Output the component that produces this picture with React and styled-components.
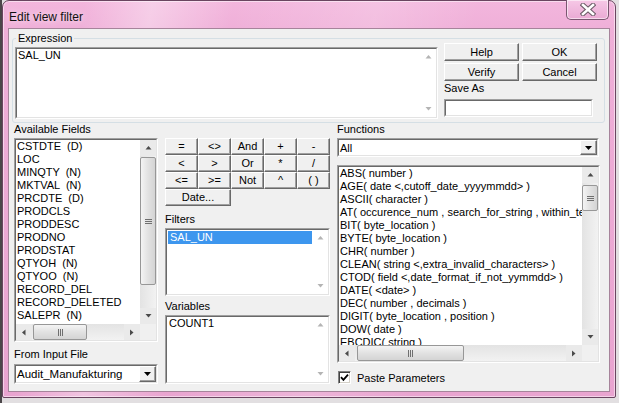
import React from 'react'
import styled, { createGlobalStyle, css } from 'styled-components'

const GlobalStyle = createGlobalStyle`
	html, body {
		margin: 0;
		padding: 0;
	}
	body {
		width: 619px;
		height: 403px;
		overflow: hidden;
		background: linear-gradient(to right, #4b4649 0 2px, #e2dfe1 2px);
		font-family: 'Liberation Sans', Arial, sans-serif;
		font-size: 11px;
		color: #000;
	}
`

const fields = [
	'CSTDTE  (D)',
	'LOC',
	'MINQTY  (N)',
	'MKTVAL  (N)',
	'PRCDTE  (D)',
	'PRODCLS',
	'PRODDESC',
	'PRODNO',
	'PRODSTAT',
	'QTYOH  (N)',
	'QTYOO  (N)',
	'RECORD_DEL',
	'RECORD_DELETED',
	'SALEPR  (N)',
]

const functions = [
	'ABS( number )',
	'AGE( date <,cutoff_date_yyyymmdd> )',
	'ASCII( character )',
	'AT( occurence_num , search_for_string , within_text )',
	'BIT( byte_location )',
	'BYTE( byte_location )',
	'CHR( number )',
	'CLEAN( string <,extra_invalid_characters> )',
	'CTOD( field <,date_format_if_not_yymmdd> )',
	'DATE( <date> )',
	'DEC( number , decimals )',
	'DIGIT( byte_location , position )',
	'DOW( date )',
	'EBCDIC( string )',
]

const operators = ['=', '<>', 'And', '+', '-', '<', '>', 'Or', '*', '/', '<=', '>=', 'Not', '^', '( )']

const raised = css`
	box-sizing: border-box;
	background: #f0f0f0;
	border: 1px solid;
	border-color: #ffffff #696969 #696969 #ffffff;
	box-shadow: inset -1px -1px 0 #a0a0a0;
`

const Window = styled.div`
	box-sizing: border-box;
	margin-left: 2px;
	width: 614px;
	height: 398px;
	display: flex;
	flex-direction: column;
	border: 1px solid #6a4560;
	border-radius: 7px 7px 2px 2px;
	padding: 0 5px 5px;
	background:
		linear-gradient(100deg, rgba(255, 255, 255, 0) 12%, rgba(255, 255, 255, 0.35) 22%, rgba(255, 255, 255, 0) 34%, rgba(255, 255, 255, 0.18) 55%, rgba(255, 255, 255, 0) 70%),
		linear-gradient(to bottom, #f3b6dd 0, #efafd8 30px, #e9a4d0 100%);
	box-shadow: inset 0 0 0 1px rgba(255, 255, 255, 0.5);
`

const TitleBar = styled.div`
	height: 27px;
	display: flex;
	justify-content: space-between;
	align-items: flex-start;
	flex-shrink: 0;
`

const Title = styled.div`
	padding: 9px 0 0 1px;
	font-size: 12px;
	line-height: 14px;
	color: #111;
	text-shadow: 0 0 6px rgba(255, 255, 255, 0.9);
`

const CloseButton = styled.div`
	box-sizing: border-box;
	margin: -1px 1px 0 0;
	width: 43px;
	height: 20px;
	display: flex;
	align-items: center;
	justify-content: center;
	border: 1px solid #7a5670;
	border-top: none;
	border-radius: 0 0 5px 5px;
	background: linear-gradient(to bottom, #f6c8e6, #eaaad4);
	box-shadow: inset 0 0 0 1px rgba(255, 255, 255, 0.55);
`

const Client = styled.div`
	flex: 1;
	display: flex;
	flex-direction: column;
	background: #f0f0f0;
	border: 1px solid #a6849b;
`

const GroupBox = styled.div`
	position: relative;
	box-sizing: border-box;
	margin: 9px 4px 0 3px;
	height: 85px;
	display: flex;
	gap: 6px;
	padding: 4px 7px 0 2px;
	border: 1px solid #d5dfe5;
	border-radius: 3px;
`

const Legend = styled.span`
	position: absolute;
	top: -7px;
	left: 3px;
	padding: 0 2px;
	line-height: 13px;
	background: #f0f0f0;
`

const Frame = styled.div`
	box-sizing: border-box;
	width: ${p => p.$w}px;
	height: ${p => p.$h}px;
	margin-top: ${p => p.$mt || 0}px;
	border: 1px solid;
	border-color: #a0a0a0 #ffffff #ffffff #a0a0a0;
	flex-shrink: 0;
`

const Well = styled.div`
	box-sizing: border-box;
	height: 100%;
	background: #fff;
	border: 1px solid;
	border-color: #696969 #e3e3e3 #e3e3e3 #696969;
	display: grid;
	grid-template-columns: 1fr 16px;
	grid-template-rows: ${p => (p.$hscroll ? '1fr 16px' : '1fr')};
	overflow: hidden;
`

const Items = styled.div`
	overflow: hidden;
	white-space: pre;
	line-height: 13px;
	padding: ${p => p.$pt || 0}px 0 0 ${p => p.$pl || 1}px;
`

const Item = styled.div`
	height: 13px;
	padding-left: ${p => (p.$selected ? 2 : 0)}px;
	background: ${p => (p.$selected ? '#3d96ee' : 'transparent')};
	color: ${p => (p.$selected ? '#fff' : '#000')};
`

const VBar = styled.div`
	display: flex;
	flex-direction: column;
	background: ${p => (p.$disabled ? '#ffffff' : '#eaeaea')};
	overflow: hidden;
`

const HBar = styled.div`
	display: flex;
	background: #eaeaea;
	overflow: hidden;
`

const ArrowBox = styled.div`
	width: 16px;
	height: 16px;
	flex-shrink: 0;
	display: flex;
	align-items: center;
	justify-content: center;
`

const VTrack = styled.div`
	flex: 1;
	display: flex;
	flex-direction: column;
	background: linear-gradient(to right, #e3e3e3, #f2f2f2);
`

const HTrack = styled.div`
	flex: 1;
	display: flex;
	background: linear-gradient(to bottom, #e3e3e3, #f2f2f2);
`

const Thumb = styled.div`
	box-sizing: border-box;
	flex-shrink: 0;
	display: flex;
	align-items: center;
	justify-content: center;
	border: 1px solid #979797;
	border-radius: 2px;
	${p =>
		p.$vertical
			? css`
					margin: ${p.$start}px 0 0 0;
					height: ${p.$size}px;
					background: linear-gradient(to right, #f4f4f4, #e2e2e2 50%, #d4d4d4);
			  `
			: css`
					margin: 0 0 0 ${p.$start}px;
					width: ${p.$size}px;
					background: linear-gradient(to bottom, #f4f4f4, #e2e2e2 50%, #d4d4d4);
			  `}
`

const Corner = styled.div`
	background: #f0f0f0;
`

const Label = styled.div`
	height: 13px;
	line-height: 13px;
	margin-top: ${p => p.$mt || 0}px;
	margin-bottom: ${p => p.$mb || 0}px;
	white-space: nowrap;
`

const ExprText = styled.div`
	padding: 0 0 0 1px;
	line-height: 13px;
`

const SidePanel = styled.div`
	width: 153px;
	display: flex;
	flex-direction: column;
`

const ButtonGrid = styled.div`
	display: grid;
	grid-template-columns: 75px 75px;
	grid-auto-rows: 18px;
	column-gap: 3px;
	row-gap: 2px;
`

const PushButton = styled.div`
	${raised};
	width: ${p => (p.$w ? `${p.$w}px` : 'auto')};
	display: flex;
	align-items: center;
	justify-content: center;
	line-height: 13px;
	white-space: pre;
`

const TextInput = styled(Frame)`
	background: #fff;
`

const InputInner = styled.div`
	box-sizing: border-box;
	height: 100%;
	border: 1px solid;
	border-color: #696969 #e3e3e3 #e3e3e3 #696969;
`

const Columns = styled.div`
	display: grid;
	grid-template-columns: 144px 165px 262px;
	column-gap: 7px;
	margin-left: 5px;
	align-items: start;
`

const Column = styled.div`
	display: flex;
	flex-direction: column;
	padding-top: ${p => p.$pt || 0}px;
`

const OpGrid = styled.div`
	display: grid;
	grid-template-columns: repeat(5, 33px);
	grid-auto-rows: 17px;
`

const Combo = styled.div`
	box-sizing: border-box;
	width: ${p => p.$w}px;
	height: ${p => p.$h}px;
	margin-top: ${p => p.$mt || 0}px;
	border: 1px solid;
	border-color: #a0a0a0 #ffffff #ffffff #a0a0a0;
`

const ComboInner = styled.div`
	box-sizing: border-box;
	height: 100%;
	display: flex;
	align-items: stretch;
	background: #fff;
	border: 1px solid;
	border-color: #696969 #e3e3e3 #e3e3e3 #696969;
`

const ComboText = styled.div`
	flex: 1;
	padding-left: 1px;
	display: flex;
	align-items: center;
	font-size: ${p => p.$fs || 11}px;
`

const DropButton = styled.div`
	${raised};
	width: 17px;
	display: flex;
	align-items: center;
	justify-content: center;
`

const CheckRow = styled.div`
	display: flex;
	align-items: center;
	gap: 6px;
	margin-top: 8px;
	height: 13px;
	padding-left: 1px;
`

const CheckBox = styled.div`
	box-sizing: border-box;
	width: 13px;
	height: 13px;
	background: #fff;
	border: 1px solid;
	border-color: #808080 #ffffff #ffffff #808080;
	box-shadow: inset 1px 1px 0 #404040, inset -1px -1px 0 #d4d0c8;
	display: flex;
	align-items: center;
	justify-content: center;
`

const Arrow = ({ dir, color = '#4a4a4a' }) => {
	const shapes = {
		up: '0.5,4.5 3.5,1 6.5,4.5',
		down: '0.5,1 3.5,4.5 6.5,1',
		left: '4.5,0.5 1,3.5 4.5,6.5',
		right: '1,0.5 4.5,3.5 1,6.5',
	}
	const vertical = dir === 'up' || dir === 'down'
	return (
		<svg width={vertical ? 7 : 6} height={vertical ? 6 : 7} viewBox={vertical ? '0 0 7 6' : '0 0 6 7'}>
			<polygon points={shapes[dir]} fill={color} />
		</svg>
	)
}

const Grip = ({ vertical }) =>
	vertical ? (
		<svg width='7' height='7' viewBox='0 0 7 7'>
			<path d='M0 1.5h7M0 3.5h7M0 5.5h7' stroke='#6f6f6f' strokeWidth='1' />
		</svg>
	) : (
		<svg width='7' height='7' viewBox='0 0 7 7'>
			<path d='M1.5 0v7M3.5 0v7M5.5 0v7' stroke='#6f6f6f' strokeWidth='1' />
		</svg>
	)

function VScroll({ thumb, disabled }) {
	const color = disabled ? '#b4b4b4' : '#4a4a4a'
	return (
		<VBar $disabled={disabled}>
			<ArrowBox>
				<Arrow dir='up' color={color} />
			</ArrowBox>
			{disabled ? (
				<div style={{ flex: 1 }} />
			) : (
				<VTrack>
					<Thumb $vertical $start={thumb[0]} $size={thumb[1]}>
						<Grip vertical />
					</Thumb>
				</VTrack>
			)}
			<ArrowBox>
				<Arrow dir='down' color={color} />
			</ArrowBox>
		</VBar>
	)
}

function HScroll({ thumb }) {
	return (
		<HBar>
			<ArrowBox>
				<Arrow dir='left' />
			</ArrowBox>
			<HTrack>
				<Thumb $start={thumb[0]} $size={thumb[1]}>
					<Grip />
				</Thumb>
			</HTrack>
			<ArrowBox>
				<Arrow dir='right' />
			</ArrowBox>
		</HBar>
	)
}

function DropArrow() {
	return (
		<svg width='7' height='4' viewBox='0 0 7 4'>
			<polygon points='0,0 7,0 3.5,4' fill='#000' />
		</svg>
	)
}

function CloseGlyph() {
	return (
		<svg width='16' height='13' viewBox='0 0 16 13'>
			<path d='M3 2l10 9M13 2L3 11' stroke='#6b5a66' strokeWidth='4.6' strokeLinecap='square' />
			<path d='M3 2l10 9M13 2L3 11' stroke='#ffffff' strokeWidth='2.6' strokeLinecap='square' />
		</svg>
	)
}

export default function App() {
	return (
		<>
			<GlobalStyle />
			<Window>
				<TitleBar>
					<Title>Edit view filter</Title>
					<CloseButton>
						<CloseGlyph />
					</CloseButton>
				</TitleBar>
				<Client>
					<GroupBox>
						<Legend>Expression</Legend>
						<Frame $w={423} $h={72} $mt={4}>
							<Well>
								<ExprText>SAL_UN</ExprText>
								<VScroll disabled />
							</Well>
						</Frame>
						<SidePanel>
							<ButtonGrid>
								<PushButton>Help</PushButton>
								<PushButton>OK</PushButton>
								<PushButton>Verify</PushButton>
								<PushButton>Cancel</PushButton>
							</ButtonGrid>
							<Label $mt={1}>Save As</Label>
							<TextInput $w={149} $h={18} $mt={4}>
								<InputInner />
							</TextInput>
						</SidePanel>
					</GroupBox>

					<Columns>
						<Column>
							<Label $mb={2}>Available Fields</Label>
							<Frame $w={144} $h={204}>
								<Well $hscroll>
									<Items $pl={1}>
										{fields.map(f => (
											<Item key={f}>{f}</Item>
										))}
									</Items>
									<VScroll thumb={[1, 128]} />
									<HScroll thumb={[1, 54]} />
									<Corner />
								</Well>
							</Frame>
							<Label $mt={6}>From Input File</Label>
							<Combo $w={144} $h={20} $mt={3}>
								<ComboInner>
									<ComboText $fs={11.5}>Audit_Manufakturing</ComboText>
									<DropButton>
										<DropArrow />
									</DropButton>
								</ComboInner>
							</Combo>
						</Column>

						<Column $pt={15}>
							<OpGrid>
								{operators.map(op => (
									<PushButton key={op}>{op}</PushButton>
								))}
							</OpGrid>
							<PushButton $w={66} style={{ height: 17 }}>
								Date...
							</PushButton>
							<Label $mt={7} $mb={2}>
								Filters
							</Label>
							<Frame $w={165} $h={68}>
								<Well>
									<Items $pt={1} $pl={0}>
										<Item $selected>SAL_UN</Item>
									</Items>
									<VScroll disabled />
								</Well>
							</Frame>
							<Label $mt={4} $mb={2}>
								Variables
							</Label>
							<Frame $w={165} $h={69}>
								<Well>
									<Items $pl={2}>
										<Item>COUNT1</Item>
									</Items>
									<VScroll disabled />
								</Well>
							</Frame>
						</Column>

						<Column>
							<Label $mb={2}>Functions</Label>
							<Combo $w={262} $h={19}>
								<ComboInner>
									<ComboText>All</ComboText>
									<DropButton>
										<DropArrow />
									</DropButton>
								</ComboInner>
							</Combo>
							<Frame $w={263} $h={198} $mt={8}>
								<Well $hscroll>
									<Items $pl={0}>
										{functions.map(f => (
											<Item key={f}>{f}</Item>
										))}
									</Items>
									<VScroll thumb={[2, 26]} />
									<HScroll thumb={[2, 107]} />
									<Corner />
								</Well>
							</Frame>
							<CheckRow>
								<CheckBox>
									<svg width='9' height='9' viewBox='0 0 9 9'>
										<path d='M1 4.2l2.4 2.6L8 1.6' stroke='#000' strokeWidth='1.8' fill='none' />
									</svg>
								</CheckBox>
								<span>Paste Parameters</span>
							</CheckRow>
						</Column>
					</Columns>
				</Client>
			</Window>
		</>
	)
}
